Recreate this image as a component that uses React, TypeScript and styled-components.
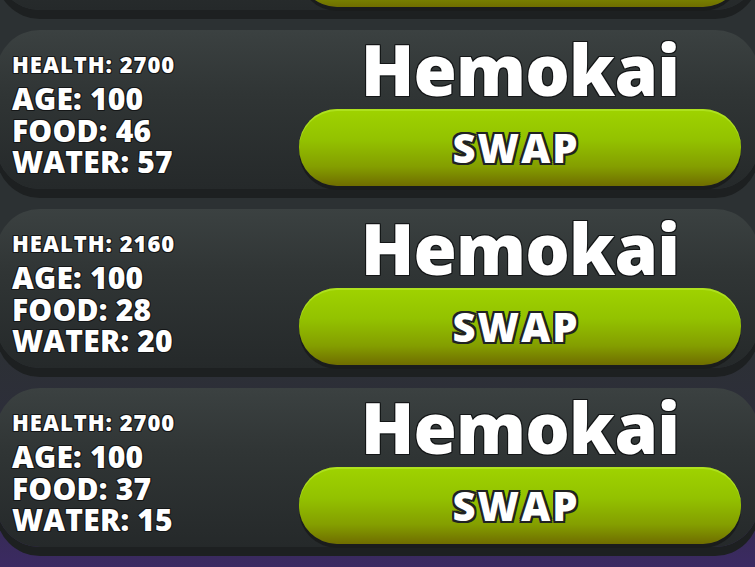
import React from 'react';
import styled, { createGlobalStyle } from 'styled-components';

interface Pet {
  health: number;
  age: number;
  food: number;
  water: number;
};

const pets: Pet[] = [
  { health: 2700, age: 100, food: 52, water: 48 },
  { health: 2700, age: 100, food: 46, water: 57 },
  { health: 2160, age: 100, food: 28, water: 20 },
  { health: 2700, age: 100, food: 37, water: 15 },
];

const GlobalStyle = createGlobalStyle`
  html, body {
    margin: 0;
    padding: 0;
    width: 755px;
    height: 567px;
    overflow: hidden;
  }
  body {
    font-family: "Open Sans", "DejaVu Sans", sans-serif;
    background: linear-gradient(180deg, #2c3133 0%, #2c3133 58%, #2d2d3c 78%, #3b2a62 100%);
  }
`;

const outline = (w: number, c: string) => `
  ${-w}px 0 0 ${c}, ${w}px 0 0 ${c}, 0 ${-w}px 0 ${c}, 0 ${w}px 0 ${c},
  ${-w}px ${-w}px 0 ${c}, ${w}px ${-w}px 0 ${c}, ${-w}px ${w}px 0 ${c}, ${w}px ${w}px 0 ${c}
`;

const PetRow = ({ health, age, food, water }: Pet) => (
  <Card>
    <Stats>
      <SmallStat>HEALTH: {health}</SmallStat>
      <Stat>AGE: {age}</Stat>
      <Stat>FOOD: {food}</Stat>
      <Stat>WATER: {water}</Stat>
    </Stats>
    <Side>
      <Name>Hemokai</Name>
      <SwapButton>SWAP</SwapButton>
    </Side>
  </Card>
);

export default function App() {
  return (
    <>
      <GlobalStyle />
      <List>
        {pets.map((p, i) => (
          <PetRow key={i} {...p} />
        ))}
      </List>
    </>
  );
}

const List = styled.div`
  display: flex;
  flex-direction: column;
  gap: 20px;

  margin-top: -149px;
  margin-left: -4px;
  width: calc(100% + 8px);
`;
const Card = styled.div`
  display: flex;
  align-items: stretch;

  height: 159px;
  padding: 0 18px 0 16px;
  box-sizing: border-box;

  border-radius: 44px;
  background: linear-gradient(180deg, #3b4141 0%, #303535 40%, #25292a 100%);
  box-shadow: 0 9px 0 #1d2021;
`;
const Stats = styled.div`
  display: flex;
  flex-direction: column;

  flex: 1;
  padding-top: 20px;

  color: #fff;
  font-weight: 800;
  text-shadow: ${outline(1, 'rgba(20,22,23,0.8)')};
`;
const SmallStat = styled.div`
  margin-bottom: 4px;

  font-size: 22px;
  line-height: 29px;
  letter-spacing: 1px;
`;
const Stat = styled.div`
  font-size: 30px;
  line-height: 31.5px;
  letter-spacing: 0.2px;
`;
const Side = styled.div`
  display: flex;
  flex-direction: column;
  align-items: center;

  width: 442px;
`;
const Name = styled.div`
  margin-top: 1px;

  color: #fff;
  font-size: 70px;
  font-weight: 800;
  line-height: 76px;
  letter-spacing: -0.8px;
  text-shadow: ${outline(1, 'rgba(20,22,23,0.9)')};
`;
const SwapButton = styled.div`
  display: flex;
  align-items: center;
  justify-content: center;

  width: 100%;
  height: 77px;
  margin-top: 2px;

  border-radius: 38px;
  background: linear-gradient(180deg, #9fd300 0%, #93c200 40%, #849e00 75%, #6f6d00 100%);
  box-shadow: 0 4px 0 #1a1c1c, inset 0 2px 0 rgba(190, 240, 60, 0.5);

  color: #fff;
  font-size: 40px;
  font-weight: 800;
  letter-spacing: 2px;
  text-indent: -8px;
  text-shadow: ${outline(2, '#202222')};
`;
